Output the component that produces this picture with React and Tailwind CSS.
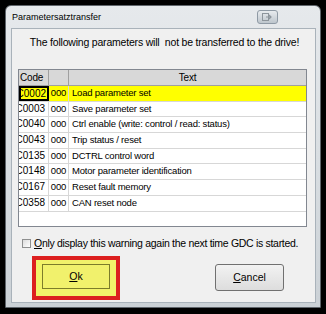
import React from 'react'

const rows = [
  { code: 'C0002', sub: '000', text: 'Load parameter set', sel: true },
  { code: 'C0003', sub: '000', text: 'Save parameter set' },
  { code: 'C0040', sub: '000', text: 'Ctrl enable (write: control / read: status)' },
  { code: 'C0043', sub: '000', text: 'Trip  status / reset' },
  { code: 'C0135', sub: '000', text: 'DCTRL control word' },
  { code: 'C0148', sub: '000', text: 'Motor parameter identification' },
  { code: 'C0167', sub: '000', text: 'Reset fault memory' },
  { code: 'C0358', sub: '000', text: 'CAN reset node' },
]

const font = { fontFamily: '"Liberation Sans", Arial, sans-serif' }

const CloseBtn = () => (
  <div className="w-[21px] h-[14px] rounded-[3px] border border-[#8f9aa5] bg-gradient-to-b from-[#e8ebee] to-[#bec6cd] flex items-center justify-center">
    <svg width="11" height="8" viewBox="0 0 11 8">
      <rect x="0.5" y="0.5" width="6" height="7" fill="none" stroke="#8d959c" />
      <path d="M4 4h5M7 2l2 2-2 2" fill="none" stroke="#8d959c" strokeWidth="1.2" />
    </svg>
  </div>
)

export default function App() {
  return (
    <div className="w-[326px] h-[314px] bg-black pt-[5px] pl-[5px] overflow-hidden" style={font}>
      <div className="w-[316px] h-[303px] rounded-t-[6px] border border-[#5f656b] bg-gradient-to-b from-[#e6e9ec] via-[#d9dee2] to-[#cbd1d6] flex flex-col pl-[5px] pr-[4px] pb-[4px]">
        {/* title bar */}
        <div className="h-[22px] flex items-center justify-between pl-[1px] pr-[38px]">
          <span className="text-[9px] text-black leading-none mt-[1px]">Parametersatztransfer</span>
          <CloseBtn />
        </div>

        {/* client area */}
        <div className="flex-1 bg-[#f0f0f0] border border-[#a9b2ba] flex flex-col">
          <p className="text-[10.5px] tracking-[-0.2px] leading-[13px] text-black text-center mt-[7px] pl-[2px]">
            The following parameters will&nbsp; not be transferred to the drive!
          </p>

          {/* table */}
          <div className="ml-[6px] mt-[20px] w-[289px] h-[158px] border border-[#828790] bg-white flex flex-col text-[9.5px] tracking-[-0.2px] text-black">
            <div className="h-[16px] flex bg-[#d8d8d8] border-b border-[#a0a0a0] text-[10px] tracking-[-0.2px]">
              <div className="w-[30px] border-r border-[#a0a0a0] pl-[1px] leading-[15px]">Code</div>
              <div className="w-[20px] border-r border-[#a0a0a0]" />
              <div className="flex-1 text-center leading-[15px]">Text</div>
            </div>
            {rows.map((r) => (
              <div
                key={r.code}
                className={`h-[15.7px] flex border-b border-[#d7d7d7] ${r.sel ? 'bg-[#ffff00]' : ''}`}
              >
                <div
                  className={`w-[30px] shrink-0 overflow-hidden whitespace-nowrap flex justify-end text-[10px] tracking-[0px] ${r.sel ? 'border-2 border-black pr-[1px] leading-[11px]' : 'border-r border-[#d7d7d7] pr-[3px] leading-[14px]'}`}
                >
                  {r.code}
                </div>
                <div className="w-[20px] shrink-0 border-r border-[#d7d7d7] text-center leading-[14px] text-[9.5px]">{r.sub}</div>
                <div className="flex-1 pl-[3px] leading-[14px] whitespace-nowrap">{r.text}</div>
              </div>
            ))}
          </div>

          {/* checkbox */}
          <div className="flex items-center mt-[10px] ml-[10px] h-[13px]">
            <div className="w-[9px] h-[9px] shrink-0 border border-[#8e8f8f] bg-gradient-to-br from-[#dcdcdc] to-white" />
            <span className="ml-[3px] text-[10.5px] tracking-[-0.3px] text-black whitespace-nowrap">
              <span className="underline">O</span>nly display this warning again the next time GDC is started.
            </span>
          </div>

          {/* buttons */}
          <div className="flex items-start justify-between mt-[6px] pl-[20px] pr-[31px]">
            <div className="border-[4px] border-[#dc1f1f] bg-[#f2f26a] pt-[4px] pb-[7px] px-[6px]">
              <div className="w-[68px] h-[25px] border border-[#7c7c2a] bg-[#f1f16c] flex items-center justify-center text-[10.5px] text-black">
                <span><span className="underline">O</span>k</span>
              </div>
            </div>
            <div className="mt-[8px] w-[69px] h-[27px] rounded-[3px] border border-[#707070] bg-gradient-to-b from-[#f2f2f2] to-[#dddddd] flex items-center justify-center text-[10.5px] text-black">
              <span><span className="underline">C</span>ancel</span>
            </div>
          </div>
        </div>
      </div>
    </div>
  )
}
